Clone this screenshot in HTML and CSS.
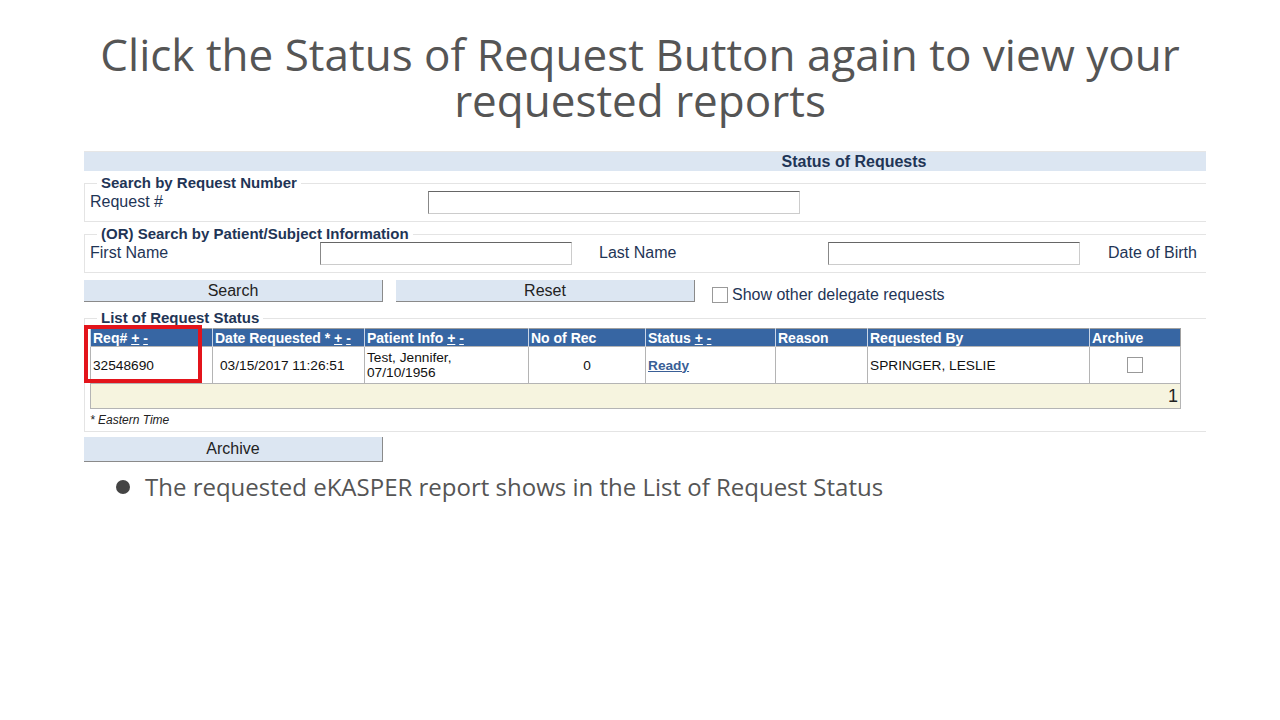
FILE: index.html
```html
<!DOCTYPE html>
<html lang="en">
<head>
<meta charset="UTF-8">
<title>Status of Requests</title>
<link rel="stylesheet" href="styles.css">
</head>
<body>
<h1 class="slide-title">Click the Status of Request Button again to view your<br>requested reports</h1>

<div class="panel">
  <div class="panel-head">Status of Requests</div>

  <fieldset class="group">
    <legend>Search by Request Number</legend>
    <div class="row row-req">
      <label>Request #</label>
      <input type="text" class="field">
    </div>
  </fieldset>

  <fieldset class="group">
    <legend>(OR) Search by Patient/Subject Information</legend>
    <div class="row row-name">
      <label>First Name</label>
      <input type="text" class="field">
      <label>Last Name</label>
      <input type="text" class="field">
      <label>Date of Birth</label>
    </div>
  </fieldset>

  <div class="actions">
    <button class="btn">Search</button>
    <button class="btn">Reset</button>
    <label class="check"><span class="box"></span>Show other delegate requests</label>
  </div>

  <fieldset class="group list">
    <legend>List of Request Status</legend>
    <div class="table-wrap">
      <table class="results">
        <colgroup>
          <col style="width:122px">
          <col style="width:152px">
          <col style="width:164px">
          <col style="width:117px">
          <col style="width:130px">
          <col style="width:92px">
          <col style="width:222px">
          <col>
        </colgroup>
        <thead>
          <tr>
            <th>Req# <u>+</u> <u>-</u></th>
            <th>Date Requested * <u>+</u> <u>-</u></th>
            <th>Patient Info <u>+</u> <u>-</u></th>
            <th>No of Rec</th>
            <th>Status <u>+</u> <u>-</u></th>
            <th>Reason</th>
            <th>Requested By</th>
            <th>Archive</th>
          </tr>
        </thead>
        <tbody>
          <tr>
            <td>32548690</td>
            <td class="date">03/15/2017 11:26:51</td>
            <td>Test, Jennifer,<br>07/10/1956</td>
            <td class="center">0</td>
            <td><a href="#">Ready</a></td>
            <td></td>
            <td>SPRINGER, LESLIE</td>
            <td class="center"><span class="box"></span></td>
          </tr>
          <tr class="pager">
            <td colspan="8">1</td>
          </tr>
        </tbody>
      </table>
      <div class="highlight"></div>
    </div>
    <div class="note">* Eastern Time</div>
  </fieldset>

  <div class="actions actions-bottom">
    <button class="btn btn-tall">Archive</button>
  </div>
</div>

<ul class="points">
  <li>The requested eKASPER report shows in the List of Request Status</li>
</ul>
</body>
</html>
```

FILE: styles.css
```css
body {
  margin: 0;
  background: #fff;
  font-family: "Liberation Sans", Arial, sans-serif;
}

.slide-title {
  margin: 31px 0 0;
  font-family: "Open Sans", sans-serif;
  font-weight: 400;
  font-size: 44px;
  line-height: 46px;
  color: #555;
  text-align: center;
}

.panel {
  width: 1122px;
  margin: 28px 0 0 84px;
  color: #1f3556;
}

.panel-head {
  height: 19px;
  line-height: 19px;
  background: #dce6f2;
  border-top: 1px solid #e6e6e6;
  padding-left: 418px;
  text-align: center;
  font-weight: bold;
  font-size: 16px;
}

.group {
  margin: 5px 0 0;
  padding: 0 5px 7px;
  border: 1px solid #e4e4e4;
  border-right: none;
}

.group legend {
  margin-left: 7px;
  padding: 0 4px;
  font-weight: bold;
  font-size: 15px;
  line-height: 14px;
}

.row {
  display: grid;
  align-items: center;
  height: 24px;
  font-size: 16px;
}

.row-req {
  grid-template-columns: 338px 372px;
}

.row-name {
  grid-template-columns: 230px 252px 27px 229px 252px 28px auto;
}

.row-name input:nth-of-type(1) {
  grid-column: 2;
}

.row-name label:nth-of-type(2) {
  grid-column: 4;
}

.row-name input:nth-of-type(2) {
  grid-column: 5;
}

.row-name label:nth-of-type(3) {
  grid-column: 7;
}

.field {
  box-sizing: border-box;
  height: 23px;
  margin: 0;
  border: 1px solid #ccc;
  border-top-color: #666;
  border-left-color: #888;
  background: #fff;
}

.actions {
  display: flex;
  align-items: center;
  gap: 13px;
  margin-top: 5px;
}

.actions-bottom {
  margin-top: 5px;
}

.btn {
  width: 299px;
  height: 22px;
  padding: 0;
  background: #dce6f2;
  border: none;
  border-right: 1px solid #8a8a8a;
  border-bottom: 1px solid #8a8a8a;
  font-family: "Liberation Sans", Arial, sans-serif;
  font-size: 16px;
  color: #222;
}

.btn-tall {
  height: 25px;
}

.check {
  display: flex;
  align-items: center;
  gap: 4px;
  margin: 8px 0 0 4px;
  font-size: 16px;
}

.box {
  display: inline-block;
  width: 14px;
  height: 14px;
  border: 1px solid #999;
  background: #fff;
  vertical-align: middle;
}

.list {
  margin-top: 7px;
  padding-bottom: 4px;
}

.table-wrap {
  position: relative;
  width: 1091px;
  margin-top: 3px;
}

.results {
  width: 100%;
  table-layout: fixed;
  border-collapse: collapse;
  border: 1px solid #a0a0a0;
  font-size: 13.7px;
  color: #111;
}

.results th {
  height: 17px;
  padding: 0 2px;
  background: #3766a3;
  color: #fff;
  font-size: 14px;
  line-height: 16px;
  text-align: left;
  border-left: 1px solid #c9d5e6;
  white-space: nowrap;
  overflow: hidden;
}

.results td {
  height: 36px;
  padding: 0 2px;
  border: 1px solid #b4b4b4;
  line-height: 15px;
}

.results td.center {
  text-align: center;
}

.results td.date {
  padding-left: 7px;
}

.results a {
  color: #3a5f96;
  font-weight: bold;
}

.results .pager td {
  height: 24px;
  background: #f6f4df;
  text-align: right;
  font-size: 18px;
  color: #222;
}

.highlight {
  position: absolute;
  left: -6px;
  top: -3px;
  width: 110px;
  height: 50px;
  border: 4px solid #e3141b;
}

.note {
  margin-top: 4px;
  font-size: 12px;
  font-style: italic;
  color: #222;
}

.points {
  margin: 8px 0 0;
  padding: 0 0 0 116px;
  list-style: none;
  font-family: "Open Sans", sans-serif;
  font-size: 24px;
  color: #555;
}

.points li {
  display: flex;
  align-items: center;
  gap: 15px;
}

.points li::before {
  content: "";
  width: 14px;
  height: 14px;
  border-radius: 50%;
  background: #444;
}
```
